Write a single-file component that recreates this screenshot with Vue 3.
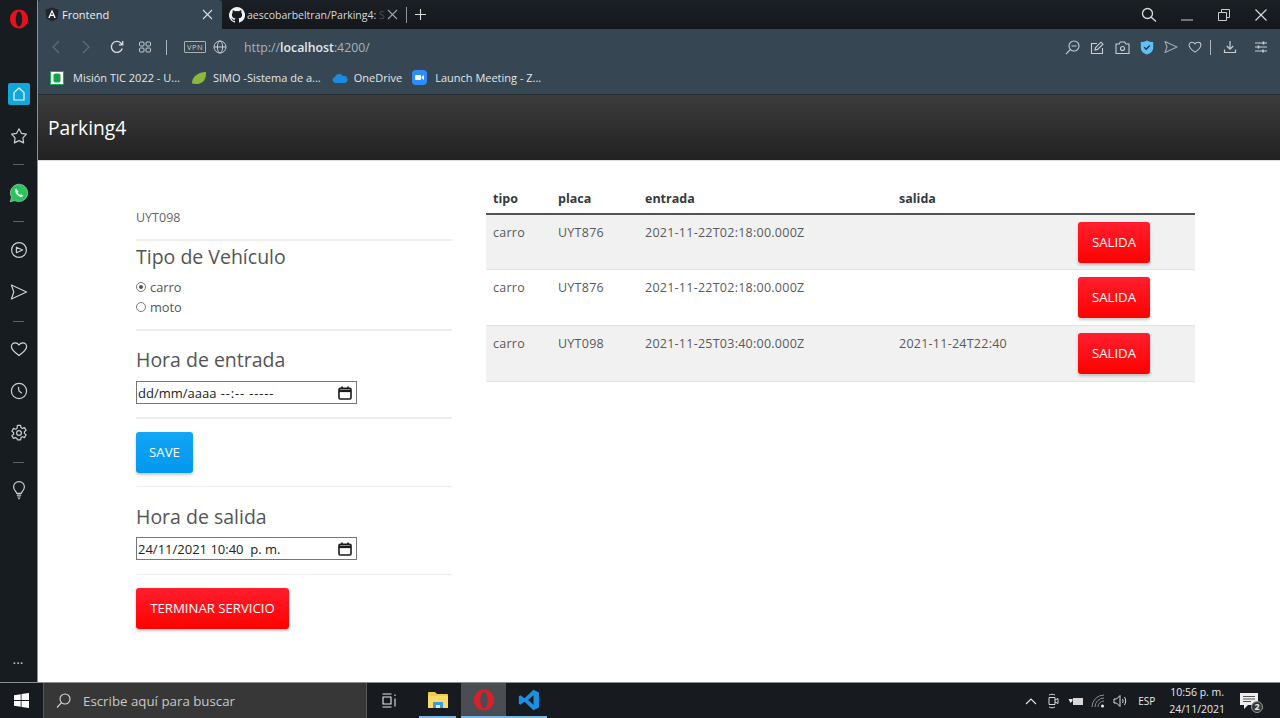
<script setup>
const rows = [
  { tipo: 'carro', placa: 'UYT876', entrada: '2021-11-22T02:18:00.000Z', salida: '' },
  { tipo: 'carro', placa: 'UYT876', entrada: '2021-11-22T02:18:00.000Z', salida: '' },
  { tipo: 'carro', placa: 'UYT098', entrada: '2021-11-25T03:40:00.000Z', salida: '2021-11-24T22:40' }
]
</script>

<template>
  <div class="screen">
    <div class="upper">
      <aside class="rail">
        <svg class="opera" width="20" height="22" viewBox="0 0 20 22"><path fill-rule="evenodd" fill="#e8101c" d="M10 1.500c5 0 9 4.200 9 9.500s-4 9.500-9 9.500S1 16.300 1 11s4-9.500 9-9.500zm0 2c-1.800 0-3.200 3.300-3.200 7.500s1.400 7.500 3.200 7.500 3.200-3.300 3.200-7.500S11.800 3.500 10 3.500z"/></svg>
        <div class="home">
          <svg width="16" height="16" viewBox="0 0 16 16" fill="none" stroke="#eaf8fd" stroke-width="1.2"><path d="M3 6.600 8 2l5 4.600V14H3z" stroke-linejoin="round"/></svg>
        </div>
        <svg class="ic star" width="18" height="18" viewBox="0 0 18 18" fill="none" stroke="#c9ced2" stroke-width="1.2"><path d="m9 1.800 2.400 4.500 5 .9-3.500 3.600.7 5.100L9 13.600l-4.600 2.300.7-5.100-3.500-3.600 5-.9z" stroke-linejoin="round"/></svg>
        <span class="dash d1"></span>
        <svg class="ic wa" width="20" height="20" viewBox="0 0 20 20"><path d="M10 1.200a8.700 8.700 0 0 0-7.500 13L1.200 18.800l4.700-1.200A8.700 8.700 0 1 0 10 1.200z" fill="#29c45c" stroke="#dcefe2" stroke-width=".5"/><path d="M7 5.600c-.9.5-1.300 1.400-1 2.600.6 2.500 3 5 5.600 5.700 1.200.3 2.200-.2 2.600-1.100l-2-1.500-1 .8c-1.100-.5-2-1.400-2.600-2.600l.8-1z" fill="#fff"/></svg>
        <span class="dash d2"></span>
        <svg class="ic play" width="18" height="18" viewBox="0 0 18 18" fill="none" stroke="#c9ced2" stroke-width="1.2"><circle cx="9" cy="9" r="7.400"/><path d="M6.400 6.200 12.600 9l-6.200 2.800z" stroke-linejoin="round"/></svg>
        <svg class="ic send" width="18" height="18" viewBox="0 0 18 18" fill="none" stroke="#c9ced2" stroke-width="1.2"><path d="M1.400 2 16.600 9 1.400 16 3.800 9z" stroke-linejoin="round"/></svg>
        <span class="dash d3"></span>
        <svg class="ic heart" width="18" height="18" viewBox="0 0 18 18" fill="none" stroke="#d5d9dc" stroke-width="1.2"><path d="M9 15.600C4 12 1.400 9.600 1.400 6.600 1.400 4.400 3.100 2.800 5.100 2.800c1.600 0 3 .8 3.900 2.200.9-1.400 2.300-2.200 3.900-2.200 2 0 3.700 1.600 3.700 3.800 0 3-2.600 5.400-7.600 9z" stroke-linejoin="round"/></svg>
        <svg class="ic clock" width="18" height="18" viewBox="0 0 18 18" fill="none" stroke="#c9ced2" stroke-width="1.2"><circle cx="9" cy="9" r="7.600"/><path d="M8.400 4.800 9 9l2.800 2.200"/></svg>
        <svg class="ic gear" width="18" height="18" viewBox="0 0 18 18" fill="none" stroke="#c9ced2" stroke-width="1.200"><path d="M7.400 1.400h3.200l.4 2.200 1.400.8 2.100-.8 1.600 2.800-1.700 1.400v1.600l1.700 1.400-1.600 2.800-2.100-.8-1.400.8-.4 2.200H7.400L7 14.400l-1.400-.8-2.100.8-1.600-2.800 1.700-1.400V8.600L1.900 7.200l1.600-2.800 2.100.8L7 4.400z" stroke-linejoin="round"/><circle cx="9" cy="9" r="2.400"/></svg>
        <span class="dash d4"></span>
        <svg class="ic bulb" width="18" height="20" viewBox="0 0 18 20" fill="none" stroke="#c9ced2" stroke-width="1.200"><path d="M6.800 13.400C6.600 11.600 3.600 10.400 3.600 7a5.400 5.400 0 0 1 10.800 0c0 3.400-3 4.600-3.200 6.400z"/><path d="M6.800 15.200h4.400M7.400 17h3.200M8.200 18.600h1.600"/></svg>
        <span class="more">•••</span>
      </aside>

      <div class="browser">
        <header class="tabs">
          <div class="tab active">
            <svg width="14" height="15" viewBox="0 0 14 15"><path d="M7 .5 13.500 2.800 12.500 11.500 7 14.500 1.500 11.500.5 2.800z" fill="#20262c"/><path d="M7 2.500 3.200 11h1.500l.8-2h3l.8 2h1.500zM6 7.800l1-2.500 1 2.500z" fill="#fff"/></svg>
            <span class="tab-title">Frontend</span>
            <svg class="x" width="11" height="11" viewBox="0 0 11 11" stroke="#d8dde0" stroke-width="1.100"><path d="m1 1 9 9M10 1l-9 9"/></svg>
          </div>
          <div class="tab second">
            <svg width="16" height="16" viewBox="0 0 16 16"><path fill="#f2f3f4" d="M8 0a8 8 0 0 0-2.530 15.590c.4.070.55-.170.550-.380v-1.340c-2.230.480-2.700-1.070-2.700-1.070-.360-.930-.890-1.170-.890-1.170-.730-.500.050-.490.050-.490.800.060 1.220.830 1.220.830.720 1.220 1.870.870 2.330.660.070-.520.280-.870.510-1.070-1.780-.200-3.640-.890-3.640-3.950 0-.870.310-1.590.820-2.150-.080-.200-.360-1.020.080-2.120 0 0 .670-.210 2.200.820a7.600 7.600 0 0 1 4 0c1.530-1.040 2.200-.820 2.200-.820.440 1.100.160 1.920.080 2.120.510.560.820 1.270.820 2.150 0 3.070-1.870 3.750-3.650 3.950.290.250.540.730.540 1.480v2.190c0 .210.150.460.550.380A8 8 0 0 0 8 0z"/></svg>
            <span class="tab-title small">aescobarbeltran/Parking4: <i class="fade">S</i></span>
            <svg class="x" width="11" height="11" viewBox="0 0 11 11" stroke="#9aa1a6" stroke-width="1.100"><path d="m1 1 9 9M10 1l-9 9"/></svg>
          </div>
          <span class="tab-sep"></span>
          <svg class="plus" width="11" height="11" viewBox="0 0 11 11" stroke="#d8dde0" stroke-width="1.100"><path d="M5.500 0v11M0 5.500h11"/></svg>
          <div class="win">
            <svg width="16" height="16" viewBox="0 0 16 16" fill="none" stroke="#d8dde0" stroke-width="1.300"><circle cx="6.500" cy="6.500" r="5"/><path d="m10.200 10.200 4.800 4.300"/></svg>
            <svg class="min" width="12" height="12" viewBox="0 0 12 12" stroke="#b8bec2" stroke-width="1.100"><path d="M0 11h12"/></svg>
            <svg width="12" height="12" viewBox="0 0 12 12" fill="none" stroke="#c8cdd0" stroke-width="1"><path d="M.5 3.500h8v8h-8zM3.500 3.500v-3h8v8h-3"/></svg>
            <svg width="12" height="12" viewBox="0 0 12 12" stroke="#d8dde0" stroke-width="1.100"><path d="m.5.500 11 11M11.500.500l-11 11"/></svg>
          </div>
        </header>

        <div class="toolbar">
          <svg class="nav" width="10" height="14" viewBox="0 0 10 14" fill="none" stroke="#5d6d7a" stroke-width="1.200"><path d="M8 1 2 7l6 6"/></svg>
          <svg class="nav n2" width="10" height="14" viewBox="0 0 10 14" fill="none" stroke="#5d6d7a" stroke-width="1.200"><path d="m2 1 6 6-6 6"/></svg>
          <svg class="reload" width="14" height="14" viewBox="0 0 14 14" fill="none" stroke="#d8dde0" stroke-width="1.300"><path d="M12.200 8.500A5.500 5.500 0 1 1 10.800 3L12.500 4.800M12.700 1v3.900H8.900"/></svg>
          <svg class="grid4" width="12" height="12" viewBox="0 0 12 12" fill="none" stroke="#c5cbcf" stroke-width="1"><rect x=".5" y="1" width="4.500" height="4" rx="1"/><rect x="7" y="1" width="4.500" height="4" rx="1"/><rect x=".5" y="7" width="4.500" height="4" rx="1"/><rect x="7" y="7" width="4.500" height="4" rx="1"/></svg>
          <span class="bar-sep s1"></span>
          <span class="vpn">VPN</span>
          <svg class="globe" width="14" height="14" viewBox="0 0 14 14" fill="none" stroke="#c5cbcf" stroke-width="1"><circle cx="7" cy="7" r="6"/><ellipse cx="7" cy="7" rx="2.600" ry="6"/><path d="M1 7h12"/></svg>
          <span class="url">http://<b>localhost</b>:4200/</span>
          <div class="tools">
            <svg width="15" height="15" viewBox="0 0 15 15" fill="none" stroke="#c9ced2" stroke-width="1.100"><circle cx="9" cy="6" r="5"/><path d="M6.500 6h5M5.300 9.700 1 14"/></svg>
            <svg width="15" height="15" viewBox="0 0 15 15" fill="none" stroke="#c9ced2" stroke-width="1.100"><path d="M12.500 8v5.500h-11v-10H7"/><path d="m5 10 .6-2.400L11 2.200l2 2-5.400 5.200z"/></svg>
            <svg width="15" height="15" viewBox="0 0 15 15" fill="none" stroke="#c9ced2" stroke-width="1.100"><path d="M1 4h3.200l1-2h4.600l1 2H14v9.500H1z"/><circle cx="7.500" cy="8.500" r="2"/></svg>
            <svg width="14" height="15" viewBox="0 0 14 15"><path d="M7 .5c2 1.100 4 1.500 6.200 1.500v6c0 3-2.400 5.300-6.200 6.500C3.200 13.300.8 11 .8 8V2C3 2 5 1.600 7 .5z" fill="#5fc1f3"/><path d="m4.200 7.200 2 2 3.600-3.600" fill="none" stroke="#1e3a4e" stroke-width="1.400"/></svg>
            <svg width="14" height="14" viewBox="0 0 14 14" fill="none" stroke="#9fa8ae" stroke-width="1.100"><path d="M1 1.500 13 7 1 12.500 3 7z" stroke-linejoin="round"/></svg>
            <svg width="14" height="14" viewBox="0 0 18 18" fill="none" stroke="#c9ced2" stroke-width="1.300"><path d="M9 15.600C4 12 1.400 9.600 1.400 6.600 1.400 4.400 3.100 2.800 5.100 2.800c1.600 0 3 .8 3.900 2.200.9-1.400 2.300-2.200 3.900-2.200 2 0 3.700 1.600 3.700 3.800 0 3-2.600 5.400-7.600 9z"/></svg>
            <span class="bar-sep s2"></span>
            <svg class="dl" width="14" height="14" viewBox="0 0 14 14" fill="none" stroke="#c9ced2" stroke-width="1.200"><path d="M7 1v8M3.800 6 7 9.200 10.200 6M1.500 9.500v3h11v-3"/></svg>
            <svg class="eas" width="14" height="14" viewBox="0 0 14 14" stroke="#c9ced2" stroke-width="1.200"><path d="M1 3h12M1 7h12M1 11h12"/><path d="M9.500 1.500v3M4.500 5.500v3M9 9.500v3" stroke-width="1.600"/></svg>
          </div>
        </div>

        <nav class="bookmarks">
          <span class="bm b1">
            <svg width="14" height="14" viewBox="0 0 14 14"><rect x=".5" y=".5" width="13" height="13" fill="#fff" stroke="#1aa84f"/><rect x="3.500" y="2.500" width="7" height="9" rx="2" fill="#16a34a"/></svg>
            Misión TIC 2022 - U...
          </span>
          <span class="bm b2">
            <svg width="16" height="14" viewBox="0 0 16 14"><path d="M1 12.500C1 6 6 1.500 15 1c.6 7-3 12-9 12-2 0-3.500-.3-5-.5z" fill="#8cb93a"/></svg>
            SIMO -Sistema de a...
          </span>
          <span class="bm b3">
            <svg width="16" height="10" viewBox="0 0 16 10"><path d="M3.500 10a3 3 0 0 1-.7-5.900A4.300 4.300 0 0 1 10.700 3 3.500 3.500 0 0 1 13 10z" fill="#1a8ce0"/></svg>
            OneDrive
          </span>
          <span class="bm b4">
            <svg width="15" height="15" viewBox="0 0 15 15"><rect width="15" height="15" rx="4" fill="#2d8cff"/><rect x="3" y="5" width="6" height="5" rx="1" fill="#fff"/><path d="m9.500 7 2.500-2v5L9.500 8z" fill="#fff"/></svg>
            Launch Meeting - Z...
          </span>
        </nav>

        <div class="appbar">Parking4</div>

        <main class="page">
          <section class="form">
            <div class="plate-row"><span class="plate">UYT098</span></div>
            <div class="group g-type">
              <h2>Tipo de Vehículo</h2>
              <label class="radio"><span class="dot on"></span>carro</label>
              <label class="radio"><span class="dot"></span>moto</label>
            </div>
            <div class="group g-in">
              <h2>Hora de entrada</h2>
              <div class="date">
                <span>dd/mm/aaaa <span class="dashes">--:--</span> <span class="dashes">-----</span></span>
                <svg width="14" height="14" viewBox="0 0 14 14" fill="none" stroke="#1a1a1a" stroke-width="1.600"><rect x="1" y="2.200" width="12" height="10.800" rx="1.200"/><path d="M1 4.800h12" stroke-width="2.600"/><path d="M4 .5v2M10 .5v2"/></svg>
              </div>
            </div>
            <div class="group g-btn"><button class="btn blue">SAVE</button></div>
            <div class="group g-out">
              <h2>Hora de salida</h2>
              <div class="date">
                <span>24/11/2021 10:40 &nbsp;p. m.</span>
                <svg width="14" height="14" viewBox="0 0 14 14" fill="none" stroke="#1a1a1a" stroke-width="1.600"><rect x="1" y="2.200" width="12" height="10.800" rx="1.200"/><path d="M1 4.800h12" stroke-width="2.600"/><path d="M4 .5v2M10 .5v2"/></svg>
              </div>
            </div>
            <div class="group g-end"><button class="btn red">TERMINAR SERVICIO</button></div>
          </section>

          <section class="list">
            <table>
              <thead>
                <tr><th class="c1">tipo</th><th class="c2">placa</th><th class="c3">entrada</th><th class="c4">salida</th><th></th></tr>
              </thead>
              <tbody>
                <tr v-for="(r, i) in rows" :key="i">
                  <td>{{ r.tipo }}</td><td>{{ r.placa }}</td><td>{{ r.entrada }}</td><td>{{ r.salida }}</td>
                  <td class="act"><button class="btn red small">SALIDA</button></td>
                </tr>
              </tbody>
            </table>
          </section>
        </main>
      </div>
    </div>

    <footer class="taskbar">
      <svg class="start" width="15" height="15" viewBox="0 0 15 15" fill="#fff"><path d="m0 2.200 6.700-1v5.900H0zM7.500 1.100 15 0v7.100H7.500zM0 7.900h6.700v5.900l-6.700-1zM7.500 7.900H15V15l-7.500-1.100z"/></svg>
      <div class="search">
        <svg width="15" height="15" viewBox="0 0 15 15" fill="none" stroke="#d8d8d8" stroke-width="1.100"><circle cx="9" cy="6" r="5"/><path d="M5.500 9.700 1 14.500"/></svg>
        <span>Escribe aquí para buscar</span>
      </div>
      <svg class="tv" width="15" height="15" viewBox="0 0 15 15" fill="none" stroke="#e8e8e8" stroke-width="1.100"><path d="M.5 1h9M.5 14h9M1 4h8v7H1zM13 1.500v1.500M13 5.500v8"/></svg>
      <div class="app folder">
        <svg width="20" height="17" viewBox="0 0 20 17"><path d="M0 2a1 1 0 0 1 1-1h6l2 2h10a1 1 0 0 1 1 1v12H0z" fill="#f7c948"/><path d="M0 5h20v12H0z" fill="#fbd968"/><path d="M5 11h10v6H5z" fill="#3c9be0"/><path d="M8 14h4v3H8z" fill="#dfe8ee"/></svg>
      </div>
      <div class="app opera-app">
        <svg width="22" height="24" viewBox="0 0 22 24"><path fill-rule="evenodd" fill="#d8202a" d="M11 1.500c5.500 0 10 4.700 10 10.500s-4.500 10.500-10 10.500S1 17.800 1 12 5.500 1.500 11 1.500zm0 2.200c-2 0-3.600 3.700-3.600 8.300s1.600 8.300 3.600 8.300 3.600-3.700 3.600-8.300S13 3.700 11 3.700z"/></svg>
      </div>
      <div class="app code">
        <svg width="22" height="22" viewBox="0 0 22 22"><path d="M15.500.8 21 3.500v15L15.500 21.200 6.500 12.800 2.600 15.800.8 14.800V7.200l1.800-1 3.900 3zM15.500 6.200 10 11l5.500 4.800z" fill="#1b8fe0" fill-rule="evenodd"/></svg>
      </div>
      <div class="tray">
        <svg width="12" height="8" viewBox="0 0 12 8" fill="none" stroke="#e8e8e8" stroke-width="1.100"><path d="m1 7 5-5 5 5"/></svg>
        <svg class="t-meet" width="14" height="16" viewBox="0 0 14 16" fill="none" stroke="#d8d8d8" stroke-width="1"><path d="M3 4.500h6v7H3zM9 7l3-1.500v5L9 9M3 2c2-1 4-1 6 0M3 14c2 1 4 1 6 0"/></svg>
        <svg class="t-bat" width="16" height="12" viewBox="0 0 16 12"><path d="M1 1v3M4 1v3M.5 4h4v2l-2 2z" fill="#e8e8e8"/><rect x="5" y="3" width="10" height="7" fill="#d8d8d8"/></svg>
        <svg class="t-wifi" width="15" height="14" viewBox="0 0 15 14" fill="none" stroke="#8d8d8d" stroke-width="1"><path d="M1 13A12 12 0 0 1 13 1M4 13a9 9 0 0 1 9-9M7 13a6 6 0 0 1 6-6"/><circle cx="11.500" cy="12" r="1.500" fill="#eee" stroke="none"/></svg>
        <svg class="t-vol" width="15" height="14" viewBox="0 0 15 14" fill="none" stroke="#dcdcdc" stroke-width="1"><path d="M1 5h2.500L7 1.500v11L3.500 9H1zM9.500 5c.8 1.200.8 2.800 0 4M11.500 3c1.600 2.500 1.600 5.500 0 8"/></svg>
        <span class="lang">ESP</span>
        <div class="clock-txt"><span>10:56 p. m.</span><span>24/11/2021</span></div>
        <span class="notif">
          <svg width="18" height="16" viewBox="0 0 18 16"><path d="M0 0h18v12H8l-4 4v-4H0z" fill="#eee"/><path d="M3 3.500h12M3 6h12M3 8.500h8" stroke="#555" stroke-width="1"/></svg>
          <b class="badge">2</b>
        </span>
      </div>
    </footer>
  </div>
</template>

<style>
html, body { margin: 0; overflow: hidden; background: #fff; }
</style>

<style scoped>
.screen { width: 1280px; height: 718px; display: flex; flex-direction: column; overflow: hidden; font-family: "Open Sans", "Noto Sans", "Liberation Sans", sans-serif; color: #5a5a5a; }
.upper { flex: 1; display: flex; min-height: 0; }

.rail { width: 37px; flex: none; background: #171c21; border-right: 1px solid #8b9094; display: flex; flex-direction: column; align-items: center; }
.opera { margin-top: 8px; }
.home { width: 22px; height: 22px; margin-top: 53px; border-radius: 2px; background: #12a7d9; display: flex; align-items: center; justify-content: center; }
.star { margin-top: 22px; }
.dash { width: 11px; height: 1px; background: #5d6266; flex: none; }
.d1 { margin-top: 19px; }
.wa { margin-top: 18px; }
.d2 { margin-top: 18px; }
.play { margin-top: 19px; }
.send { margin-top: 24px; }
.d3 { margin-top: 20px; }
.heart { margin-top: 18px; }
.clock { margin-top: 24px; }
.gear { margin-top: 24px; }
.d4 { margin-top: 20px; }
.bulb { margin-top: 17px; }
.more { margin-top: auto; margin-bottom: 13px; color: #c9ced2; font-size: 7px; line-height: 10px; letter-spacing: 1px; }

.browser { flex: 1; min-width: 0; display: flex; flex-direction: column; }

.tabs { height: 29px; flex: none; display: flex; align-items: center; background: linear-gradient(#1b2026, #14181c); }
.tab { height: 29px; display: flex; align-items: center; box-sizing: border-box; }
.tab.active { width: 184px; padding: 0 9px 0 7px; background: #364652; border-radius: 3px 3px 0 0; }
.tab.second { width: 185px; padding: 0 0 0 7px; }
.tab-title { margin-left: 3px; font-size: 11px; color: #eef0f1; white-space: nowrap; flex: 1; }
.tab-title.small { font-size: 10.500px; margin-left: 2px; color: #d5d9dc; }
.fade { font-style: normal; opacity: .25; }
.tab.second .x { margin: 0 9px 0 0; flex: none; }
.tab-sep { width: 1px; height: 16px; background: #8e959a; margin-left: -1px; }
.plus { margin-left: 8px; }
.win { margin-left: auto; display: flex; align-items: center; padding-right: 13px; }
.win svg + svg { margin-left: 25px; }
.win .min { margin-left: 24px; }

.toolbar { height: 35px; flex: none; background: #364652; display: flex; align-items: center; padding-left: 13px; padding-top: 1px; box-sizing: border-box; }
.n2 { margin-left: 20px; }
.reload { margin-left: 19px; }
.grid4 { margin-left: 15px; }
.bar-sep { width: 1px; height: 15px; background: #aeb5ba; }
.s1 { margin-left: 15px; }
.vpn { margin-left: 17px; width: 22px; height: 12px; box-sizing: border-box; border: 1px solid #aab1b6; border-radius: 1px; font-size: 7.500px; line-height: 10px; text-align: center; letter-spacing: .5px; color: #c5cbcf; }
.globe { margin-left: 7px; }
.url { margin-left: 17px; font-size: 12.300px; color: #aab3b9; }
.url b { font-weight: 600; color: #e6e9eb; }
.tools { margin-left: auto; display: flex; align-items: center; gap: 10px; padding-right: 12px; }
.s2 { margin-left: -2px; }
.dl { margin-left: 2px; }
.eas { margin-left: 7px; }

.bookmarks { height: 31px; flex: none; background: #364652; border-bottom: 1px solid #232a30; box-sizing: border-box; display: flex; align-items: center; padding-left: 12px; padding-bottom: 3px; font-size: 11px; color: #e3e6e8; }
.bm { display: flex; align-items: center; gap: 9px; white-space: nowrap; }
.b2 { margin-left: 11px; gap: 6px; }
.b3 { margin-left: 11px; gap: 6px; }
.b4 { margin-left: 10px; gap: 8px; }

.appbar { height: 66px; flex: none; box-sizing: border-box; padding-left: 10px; display: flex; align-items: center; background: linear-gradient(#3c3c3c, #222); border-bottom: 1px solid #ddd; color: #fff; font-size: 19.200px; }

.page { flex: 1; min-height: 0; display: flex; background: #fff; padding-left: 98px; }

.form { width: 316px; flex: none; padding-top: 45px; }
.plate-row { height: 35px; box-sizing: border-box; border-bottom: 2px solid #eee; font-size: 12.500px; color: #666; line-height: 23px; }
.group { border-bottom: 2px solid #eee; box-sizing: border-box; }
h2 { margin: 0; font-weight: 400; font-size: 19.500px; color: #555; line-height: 27px; }
.g-type { height: 90px; padding-top: 2px; }
.radio { display: flex; align-items: center; gap: 4px; font-size: 12.800px; height: 20px; color: #555; }
.g-type h2 { margin-bottom: 7px; }
.dot { width: 10px; height: 10px; box-sizing: border-box; border: 1px solid #777; border-radius: 50%; background: #fff; position: relative; }
.dot.on::after { content: ""; position: absolute; left: 2px; top: 2px; width: 4px; height: 4px; border-radius: 50%; background: #555; }
.g-in { height: 88px; padding-top: 15px; }
.g-in h2 { margin-bottom: 8px; }
.g-out h2 { margin-bottom: 7px; }
.date { width: 221px; height: 23px; box-sizing: border-box; border: 1px solid #767676; padding: 0 4px 0 1px; display: flex; align-items: center; justify-content: space-between; font-size: 13px; color: #222; }
.dashes { letter-spacing: .8px; margin-left: 1px; }
.g-btn { height: 68px; padding-top: 13px; border-bottom-width: 1px; }
.g-out { height: 88px; padding-top: 16px; border-bottom-width: 1px; }
.g-end { padding-top: 13px; border: 0; }

.btn { border: 0; border-radius: 3px; height: 41px; padding: 0 0 1px; color: #fff; font: 400 13.200px "Open Sans", "Noto Sans", sans-serif; box-shadow: 0 2px 3px rgba(0, 0, 0, .22); }
.blue { background: linear-gradient(#14a5f5, #0098ef); width: 57px; }
.red { background: linear-gradient(#ff1f2e, #ff0000); width: 153px; white-space: nowrap; }
.red.small { width: 72px; }

.list { margin-left: 34px; width: 709px; padding-top: 21px; }
table { width: 709px; border-collapse: collapse; table-layout: fixed; font-size: 12.500px; color: #5a5a5a; }
th { height: 32px; padding: 2px 7px 0; box-sizing: border-box; text-align: left; font-weight: 700; color: #343a40; border-bottom: 2px solid #50555a; font-size: 12.500px; }
.c1 { width: 65px; }
.c2 { width: 87px; }
.c3 { width: 254px; }
.c4 { width: 179px; }
td { padding: 9px 7px 0; vertical-align: top; height: 55px; box-sizing: border-box; border-bottom: 1px solid #e2e2e2; line-height: 18px; letter-spacing: .25px; }
tbody tr:nth-child(n+2) td { height: 56px; }
tbody tr:nth-child(odd) td { background: #f1f1f1; }
td.act { padding: 7px 7px 0; letter-spacing: 0; }
td.act .btn { display: block; }

.taskbar { height: 36px; flex: none; box-sizing: border-box; background: #171b1f; border-top: 1px solid #8b8f92; display: flex; align-items: center; padding-left: 14px; color: #e8e8e8; }
.search { margin-left: 14px; width: 324px; height: 35px; box-sizing: border-box; background: #373737; border-left: 1px solid #585858; border-right: 1px solid #585858; display: flex; align-items: center; gap: 12px; padding-left: 12px; font-size: 13.300px; color: #c8c8c8; }
.tv { margin-left: 15px; }
.app { height: 35px; display: flex; align-items: center; justify-content: center; box-sizing: border-box; border-bottom: 2px solid #77b7e6; }
.folder { margin-left: 22px; width: 37px; }
.opera-app { margin-left: 5px; width: 45px; background: #4a4e52; }
.code { width: 41px; padding-left: 5px; }
.tray { margin-left: auto; display: flex; align-items: center; padding-right: 20px; }
.t-meet { margin-left: 9px; }
.t-bat { margin-left: 8px; }
.t-wifi { margin-left: 7px; }
.t-vol { margin-left: 7px; }
.lang { margin-left: 10px; font-size: 10px; }
.clock-txt { margin-left: 14px; display: flex; flex-direction: column; align-items: center; font-size: 10.500px; line-height: 17px; }
.notif { margin-left: 15px; position: relative; display: block; width: 20px; height: 18px; }
.badge { position: absolute; right: -3px; bottom: -3px; width: 12px; height: 12px; border-radius: 50%; background: #33383c; border: 1px solid #999; box-sizing: border-box; font-size: 9px; line-height: 10px; text-align: center; }
</style>
